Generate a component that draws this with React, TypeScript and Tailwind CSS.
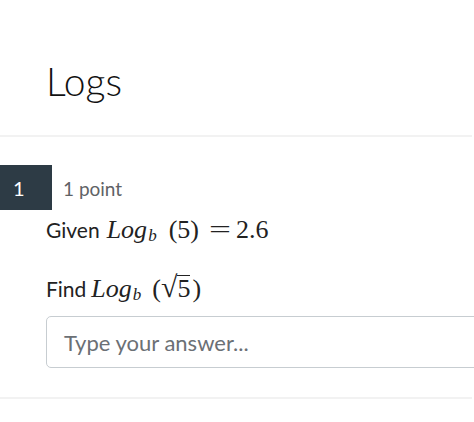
import React from "react";

export default function App() {
  const serif = { fontFamily: '"Liberation Serif", "DejaVu Serif", serif' };
  return (
    <div className="w-[474px] h-[422px] bg-white overflow-hidden" style={{ fontFamily: 'Lato, "Noto Sans", sans-serif' }}>
      <div className="pl-[46px] pt-[55px] h-[135px]">
        <h1 className="text-[39px] leading-[52px] font-light text-[#111]">Logs</h1>
      </div>
      <div className="w-[472px] h-[2px] bg-[#f2f2f2]" />
      <div className="pt-[28px] w-[472px]">
        <div className="flex items-center h-[45px]">
          <div className="w-[52px] h-[45px] bg-[#2d3b45] text-white text-[20px] flex items-center pl-[13px]">1</div>
          <div className="pl-[11px] pt-[3px] text-[19px] text-[#5f6266]">1 point</div>
        </div>
        <div className="pl-[46px] text-[21px] text-[#222] flex items-baseline h-[34px]">
          <span>Given</span>
          <span style={serif} className="text-[26px] flex items-baseline ml-[7px]">
            <i>Log</i><i className="text-[17px] ml-[1px] translate-y-[3px]">b</i>
            <span className="ml-[12px]">(5)</span>
            <span className="ml-[9px] inline-block w-[24px] text-center scale-x-150">=</span>
            <span className="ml-[4px]">2.6</span>
          </span>
        </div>
        <div className="pl-[46px] mt-[25px] text-[21px] text-[#222] flex items-baseline h-[34px]">
          <span>Find</span>
          <span style={serif} className="text-[26px] flex items-baseline ml-[5px]">
            <i>Log</i><i className="text-[17px] ml-[1px] translate-y-[3px]">b</i>
            <span className="ml-[11px] flex items-baseline">
              <span>(</span>
              <span className="text-[30px] leading-none">√</span>
              <span className="border-t-[1.5px] border-[#222] leading-[26px]">5</span>
              <span className="ml-[2px]">)</span>
            </span>
          </span>
        </div>
        <div className="pl-[46px] mt-[13px]">
          <div className="h-[52px] border border-[#c7cdd1] rounded-[5px] flex items-center pl-[17px] text-[22px] text-[#6b7075] w-[440px]">
            Type your answer...
          </div>
        </div>
        <div className="mt-[29px] w-[472px] h-[2px] bg-[#f2f2f2]" />
      </div>
    </div>
  );
}
